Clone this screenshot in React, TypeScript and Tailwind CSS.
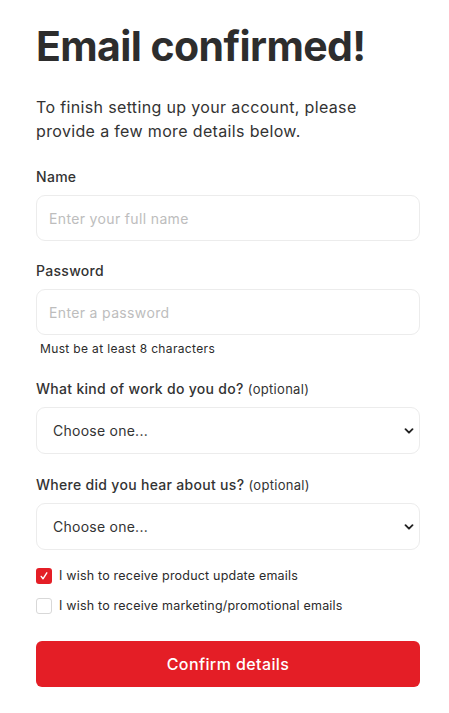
import React, { useState } from "react";

function Chevron() {
  return (
    <svg width="10" height="10" viewBox="0 0 10 10" className="pointer-events-none absolute right-[6px] top-1/2 -translate-y-1/2">
      <path d="M1.5 3.2 L5 6.7 L8.5 3.2" fill="none" stroke="#222" strokeWidth="1.9" strokeLinecap="round" strokeLinejoin="round" />
    </svg>
  );
}

function SelectField({ label }: { label: string }) {
  return (
    <div className="flex flex-col">
      <label className="text-[14px] leading-[20px] font-medium tracking-[0.3px] text-[#333] mb-[8px]">
        {label} <span className="text-[13px] font-normal">(optional)</span>
      </label>
      <div className="relative">
        <select
          defaultValue=""
          className="appearance-none w-full h-[47px] rounded-[9px] border border-[#ececec] bg-white pl-[16px] pr-[30px] text-[14px] tracking-[0.25px] text-[#333] outline-none"
        >
          <option value="">Choose one...</option>
        </select>
        <Chevron />
      </div>
    </div>
  );
}

function Check({ on }: { on: boolean }) {
  return (
    <span
      className={
        on
          ? "w-[16px] h-[16px] rounded-[3px] bg-[#e41e26] flex items-center justify-center shrink-0"
          : "w-[16px] h-[16px] rounded-[3px] border border-[#d8d8d8] bg-white shrink-0"
      }
    >
      {on && (
        <svg width="10" height="10" viewBox="0 0 10 10">
          <path d="M2.2 5.4 L4 7.8 L7.8 1.8" fill="none" stroke="white" strokeWidth="1.4" strokeLinecap="round" strokeLinejoin="round" />
        </svg>
      )}
    </span>
  );
}

export default function App() {
  const [c1, setC1] = useState(true);
  const [c2, setC2] = useState(false);
  return (
    <div
      className="min-h-[713px] bg-white pl-[36px] pr-[29px] pt-[19px] text-[#2b2b2b]"
      style={{ fontFamily: "Inter, 'Noto Sans', sans-serif" }}
    >
      <h1 className="text-[41px] leading-[54px] font-bold tracking-[-0.6px] text-[#2d2d2d]">Email confirmed!</h1>
      <p className="mt-[22px] text-[16px] leading-[24px] tracking-[0.35px] text-[#333]">
        To finish setting up your account, please provide a few more details below.
      </p>

      <div className="mt-[24px] flex flex-col">
        <label className="text-[14px] leading-[20px] font-medium tracking-[0.3px] text-[#333] mb-[8px]">Name</label>
        <input
          placeholder="Enter your full name"
          className="h-[46px] rounded-[9px] border border-[#ececec] px-[12px] text-[14px] tracking-[0.35px] placeholder:text-[#bdbdbd] outline-none"
        />
      </div>

      <div className="mt-[20px] flex flex-col">
        <label className="text-[14px] leading-[20px] font-medium tracking-[0.3px] text-[#333] mb-[8px]">Password</label>
        <input
          type="password"
          placeholder="Enter a password"
          className="h-[46px] rounded-[9px] border border-[#ececec] px-[12px] text-[14px] tracking-[0.35px] placeholder:text-[#bdbdbd] outline-none"
        />
        <span className="mt-[6px] ml-[4px] text-[12px] leading-[16px] tracking-[0.35px] text-[#2b2b2b]">Must be at least 8 characters</span>
      </div>

      <div className="mt-[22px]">
        <SelectField label="What kind of work do you do?" />
      </div>
      <div className="mt-[21px]">
        <SelectField label="Where did you hear about us?" />
      </div>

      <div className="mt-[18px] flex flex-col gap-[14px]">
        <label className="flex items-center gap-[7px] cursor-pointer" onClick={() => setC1(!c1)}>
          <Check on={c1} />
          <span className="text-[12.5px] leading-[16px] tracking-[0.2px] text-[#2b2b2b]">I wish to receive product update emails</span>
        </label>
        <label className="flex items-center gap-[7px] cursor-pointer" onClick={() => setC2(!c2)}>
          <Check on={c2} />
          <span className="text-[12.5px] leading-[16px] tracking-[0.2px] text-[#2b2b2b]">I wish to receive marketing/promotional emails</span>
        </label>
      </div>

      <button className="mt-[27px] w-full h-[46px] rounded-[6px] bg-[#e41e26] text-white text-[16px] font-medium tracking-[0.4px]">
        Confirm details
      </button>
    </div>
  );
}
